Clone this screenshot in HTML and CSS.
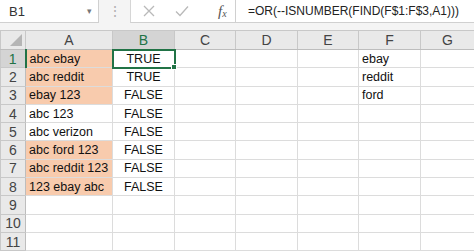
FILE: index.html
```html
<!DOCTYPE html>
<html lang="en">
<head>
    <meta charset="UTF-8">
    <title>Sheet1</title>
    <link rel="stylesheet" href="styles.css">
</head>
<body>
    <div class="bar">
        <div class="namebox">
            <span>B1</span>
            <span class="drop">&#9662;</span>
        </div>
        <div class="grip">&#8942;</div>
        <div class="fbuttons">
            <svg class="icon" width="12" height="12" viewBox="0 0 12 12">
                <path d="M1 1 L11 11 M11 1 L1 11" stroke="#b9b9b9" stroke-width="1.3" fill="none"/>
            </svg>
            <svg class="icon" width="14" height="12" viewBox="0 0 14 12">
                <path d="M1 6.5 L5 10.5 L13 1.5" stroke="#b9b9b9" stroke-width="1.3" fill="none"/>
            </svg>
            <span class="fx">f<sub>x</sub></span>
        </div>
        <div class="formula">=OR(--ISNUMBER(FIND(F$1:F$3,A1)))</div>
    </div>

    <table class="sheet">
        <colgroup>
            <col class="c-row">
            <col class="c-a">
            <col class="c-b">
            <col class="c-c">
            <col class="c-d">
            <col class="c-e">
            <col class="c-f">
            <col class="c-g">
        </colgroup>
        <tr class="head">
            <th class="corner"><span class="tri"></span></th>
            <th>A</th><th class="sel">B</th><th>C</th><th>D</th><th>E</th><th>F</th><th>G</th>
        </tr>
        <tr>
            <th class="num sel">1</th>
            <td class="hl">abc ebay</td><td class="mid active">TRUE</td><td></td><td></td><td></td><td>ebay</td><td></td>
        </tr>
        <tr>
            <th class="num">2</th>
            <td class="hl">abc reddit</td><td class="mid">TRUE</td><td></td><td></td><td></td><td>reddit</td><td></td>
        </tr>
        <tr>
            <th class="num">3</th>
            <td class="hl">ebay 123</td><td class="mid">FALSE</td><td></td><td></td><td></td><td>ford</td><td></td>
        </tr>
        <tr>
            <th class="num">4</th>
            <td>abc 123</td><td class="mid">FALSE</td><td></td><td></td><td></td><td></td><td></td>
        </tr>
        <tr>
            <th class="num">5</th>
            <td>abc verizon</td><td class="mid">FALSE</td><td></td><td></td><td></td><td></td><td></td>
        </tr>
        <tr>
            <th class="num">6</th>
            <td class="hl">abc ford 123</td><td class="mid">FALSE</td><td></td><td></td><td></td><td></td><td></td>
        </tr>
        <tr>
            <th class="num">7</th>
            <td class="hl">abc reddit 123</td><td class="mid">FALSE</td><td></td><td></td><td></td><td></td><td></td>
        </tr>
        <tr>
            <th class="num">8</th>
            <td class="hl">123 ebay abc</td><td class="mid">FALSE</td><td></td><td></td><td></td><td></td><td></td>
        </tr>
        <tr>
            <th class="num">9</th>
            <td></td><td></td><td></td><td></td><td></td><td></td><td></td>
        </tr>
        <tr>
            <th class="num">10</th>
            <td></td><td></td><td></td><td></td><td></td><td></td><td></td>
        </tr>
        <tr>
            <th class="num">11</th>
            <td></td><td></td><td></td><td></td><td></td><td></td><td></td>
        </tr>
    </table>
</body>
</html>
```

FILE: styles.css
```css
body{
    margin: 0;
    background: #ffffff;
    font-family: "Liberation Sans", Arial, sans-serif;
    color: #222;
    overflow: hidden;
}

/* formula bar */
.bar{
    display: flex;
    height: 23px;
    padding-bottom: 7px;
    background: #f4f4f4;
}
.namebox{
    width: 99px;
    box-sizing: border-box;
    background: #fff;
    border-right: 1px solid #d0d0d0;
    border-bottom: 1px solid #d0d0d0;
    display: flex;
    align-items: center;
    justify-content: space-between;
    padding: 0 6px 0 9px;
    font-size: 13px;
    color: #333;
}
.drop{
    font-size: 9px;
    color: #777;
}
.grip{
    width: 31px;
    text-align: center;
    color: #b0b0b0;
    font-size: 14px;
    line-height: 23px;
}
.fbuttons{
    width: 105px;
    box-sizing: border-box;
    background: #fff;
    border-left: 1px solid #d6d6d6;
    border-bottom: 1px solid #d0d0d0;
    display: flex;
    align-items: center;
    padding-left: 12px;
}
.icon{
    margin-right: 20px;
}
.fx{
    margin-left: 9px;
    font-family: "Liberation Serif", serif;
    font-style: italic;
    font-size: 15px;
    color: #555;
}
.fx sub{
    font-size: 10px;
    vertical-align: -1px;
}
.formula{
    flex: 1;
    background: #fff;
    border-left: 1px solid #d0d0d0;
    border-bottom: 1px solid #d0d0d0;
    padding-left: 12px;
    font-size: 12px;
    line-height: 23px;
    white-space: nowrap;
    overflow: hidden;
}

/* grid */
.sheet{
    border-collapse: collapse;
    table-layout: fixed;
    width: 474px;
    font-size: 12.5px;
}
.c-row{ width: 25px; }
.c-a{ width: 87px; }
.c-b{ width: 62px; }
.c-c{ width: 61px; }
.c-d{ width: 62px; }
.c-e{ width: 61px; }
.c-f{ width: 62px; }
.c-g{ width: 54px; }

.sheet tr{
    height: 18.3px;
}
.sheet tr.head{
    height: 19px;
}
.sheet th{
    background: #e9e9e9;
    color: #444;
    font-weight: normal;
    font-size: 14px;
    border: 1px solid #c8c8c8;
    padding: 0;
}
.head th{
    border-bottom-color: #bdbdbd;
}
.sheet th.num{
    text-align: center;
    border-right-color: #bdbdbd;
}
.sheet th.sel{
    background: #d4d4d4;
    color: #217346;
}
.head th.sel{
    border-bottom: 2px solid #217346;
}
th.num.sel{
    border-right: 2px solid #217346;
}
.corner{
    position: relative;
}
.tri{
    position: absolute;
    right: 3px;
    bottom: 3px;
    width: 0;
    height: 0;
    border-left: 12px solid transparent;
    border-bottom: 12px solid #b5b5b5;
}
.sheet td{
    border: 1px solid #dcdcdc;
    padding: 0 3px;
    white-space: nowrap;
    overflow: hidden;
    color: #111;
}
.sheet td.hl{
    background: #f8cbad;
}
.sheet td.mid{
    text-align: center;
}
.sheet td.active{
    position: relative;
    overflow: visible;
    outline: 2px solid #217346;
    outline-offset: -1px;
}
.active::after{
    content: "";
    position: absolute;
    right: -3px;
    bottom: -3px;
    width: 4px;
    height: 4px;
    background: #217346;
    border: 1px solid #fff;
}
```
